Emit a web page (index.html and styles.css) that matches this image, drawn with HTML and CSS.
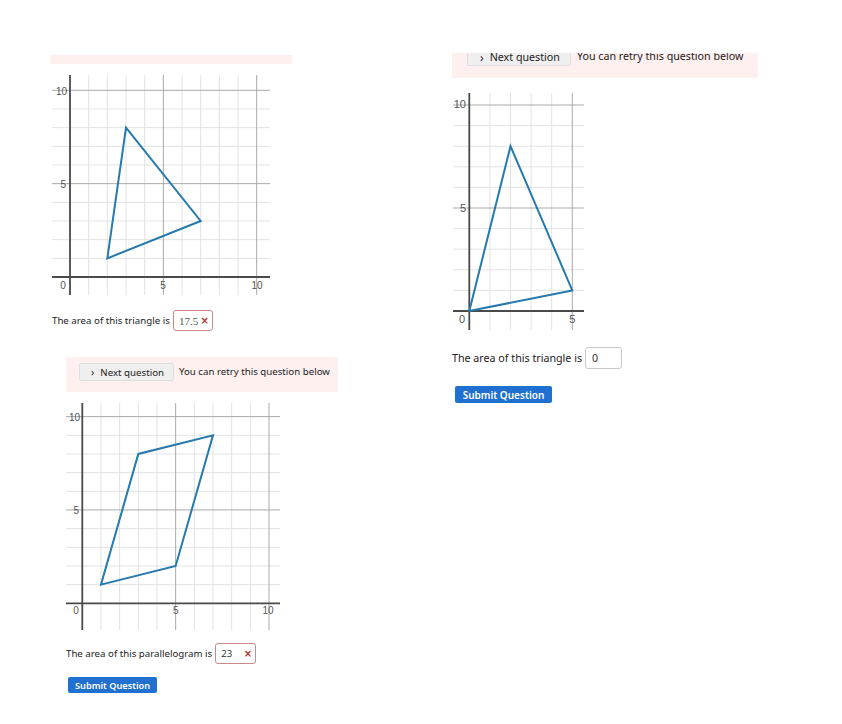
FILE: index.html
```html
<!DOCTYPE html>
<html lang="en">
<head>
<meta charset="utf-8">
<title>Area questions</title>
<link rel="stylesheet" href="styles.css">
</head>
<body>
<div class="page">
  <div class="col col-left">
    <div class="feedback-strip"></div>
    <svg class="graph g1" width="218" height="220" viewBox="0 0 218 220">
      <g transform="translate(18 202) scale(18.67 -18.67)">
        <path class="minor" d="M1-2V12M2-2V12M3-2V12M4-2V12M6-2V12M7-2V12M8-2V12M9-2V12M-2 1H12M-2 2H12M-2 3H12M-2 4H12M-2 6H12M-2 7H12M-2 8H12M-2 9H12"/>
        <path class="major" d="M5-2V12M10-2V12M-2 5H12M-2 10H12"/>
        <path class="axis" d="M0-2V12M-2 0H12"/>
        <polygon class="shape" points="3,8 7,3 2,1"/>
      </g>
      <text class="lbl" x="11" y="214" text-anchor="middle">0</text>
      <text class="lbl" x="111" y="214" text-anchor="middle">5</text>
      <text class="lbl" x="205" y="214" text-anchor="middle">10</text>
      <text class="lbl" x="15" y="19.5" text-anchor="end">10</text>
      <text class="lbl" x="14" y="112.5" text-anchor="end">5</text>
    </svg>
    <div class="answer-row">
      <span>The area of this triangle is</span>
      <span class="ans wrong w1"><span class="val serif">17.5</span><span class="cross">×</span></span>
    </div>

    <div class="section">
      <div class="feedback">
        <span class="next-btn"><span class="chev">›</span>Next question</span>
        <span class="retry">You can retry this question below</span>
      </div>
      <svg class="graph g3" width="214" height="227" viewBox="0 0 214 227">
        <g transform="translate(16.3 200.3) scale(18.67 -18.67)">
          <path class="minor" d="M1-2V12M2-2V12M3-2V12M4-2V12M6-2V12M7-2V12M8-2V12M9-2V12M-2 1H12M-2 2H12M-2 3H12M-2 4H12M-2 6H12M-2 7H12M-2 8H12M-2 9H12"/>
          <path class="major" d="M5-2V12M10-2V12M-2 5H12M-2 10H12"/>
          <path class="axis" d="M0-2V12M-2 0H12"/>
          <polygon class="shape" points="1,1 5,2 7,9 3,8"/>
        </g>
        <text class="lbl" x="10" y="211" text-anchor="middle">0</text>
        <text class="lbl" x="109.7" y="211" text-anchor="middle">5</text>
        <text class="lbl" x="202" y="211" text-anchor="middle">10</text>
        <text class="lbl" x="14" y="17.5" text-anchor="end">10</text>
        <text class="lbl" x="13" y="110.7" text-anchor="end">5</text>
      </svg>
      <div class="answer-row">
        <span>The area of this parallelogram is</span>
        <span class="ans wrong w3"><span class="val">23</span><span class="cross">×</span></span>
      </div>
      <span class="submit">Submit Question</span>
    </div>
  </div>

  <div class="col col-right">
    <div class="clip">
      <div class="feedback">
        <span class="next-btn"><span class="chev">›</span>Next question</span>
        <span class="retry">You can retry this question below</span>
      </div>
    </div>
    <svg class="graph g2" width="131" height="237" viewBox="0 0 131 237">
      <g transform="translate(16.3 218) scale(20.6 -20.6)">
        <path class="minor" d="M1-2V12M2-2V12M3-2V12M4-2V12M-2 1H12M-2 2H12M-2 3H12M-2 4H12M-2 6H12M-2 7H12M-2 8H12M-2 9H12"/>
        <path class="major" d="M5-2V12M-2 5H12M-2 10H12"/>
        <path class="axis" d="M0-2V12M-2 0H12"/>
        <polygon class="shape" points="0,0 2,8 5,1"/>
      </g>
      <text class="lbl big" x="9" y="230" text-anchor="middle">0</text>
      <text class="lbl big" x="119.3" y="230" text-anchor="middle">5</text>
      <text class="lbl big" x="13" y="15" text-anchor="end">10</text>
      <text class="lbl big" x="13" y="119" text-anchor="end">5</text>
    </svg>
    <div class="answer-row">
      <span>The area of this triangle is</span>
      <span class="ans w2"><span class="val">0</span></span>
    </div>
    <span class="submit">Submit Question</span>
  </div>
</div>
</body>
</html>
```

FILE: styles.css
```css
* { box-sizing: border-box; }
html, body { margin: 0; padding: 0; background: #ffffff; }
body { font-family: "Noto Sans", "Open Sans", sans-serif; color: #222; }

.page { display: flex; align-items: flex-start; width: 842px; height: 724px; overflow: hidden; }

.col { display: flex; flex-direction: column; align-items: flex-start; }
.col-left { margin-left: 50px; width: 402px; font-size: 9.7px; }
.col-right { width: 360px; font-size: 10.7px; }

.feedback-strip { margin-top: 55px; width: 242px; height: 9px; background: #fef0ef; }

.graph { display: block; overflow: hidden; }
.g1 { margin-top: 11px; margin-left: 2px; }
.g3 { margin-top: 11px; }
.g2 { margin-top: 15px; margin-left: 1px; }

.minor, .major, .axis, .shape { vector-effect: non-scaling-stroke; fill: none; }
.minor { stroke: #e3e3e3; stroke-width: 1; }
.major { stroke: #a9a9a9; stroke-width: 1; }
.axis { stroke: #4a4a4a; stroke-width: 1.8; }
.shape { stroke: #2679ad; stroke-width: 2; stroke-linejoin: miter; }
.lbl { font-family: "Liberation Sans", Arial, sans-serif; font-size: 10px; fill: #555; }
.lbl.big { font-size: 11px; }

.answer-row { display: flex; align-items: center; color: #222; }
.col-left > .answer-row { margin-top: 15px; margin-left: 2px; }
.section .answer-row { margin-top: 13px; }
.col-right .answer-row { margin-top: 17px; }

.ans { display: flex; align-items: center; margin-left: 3px; border: 1px solid #c9c9c9; border-radius: 3px; background: #fff; }
.ans.wrong { border-color: #c98a8a; }
.w1 { width: 40px; height: 21px; padding-left: 5px; }
.w3 { width: 41px; height: 21px; padding-left: 5px; }
.w2 { width: 37px; height: 22px; padding-left: 6px; }
.val { color: #333; }
.val.serif { font-family: "Liberation Serif", "Times New Roman", serif; font-size: 11px; color: #555; }
.cross { margin-left: auto; margin-right: 3px; color: #b0302b; font-weight: bold; font-family: "DejaVu Sans", sans-serif; font-size: 10px; }

.section { display: flex; flex-direction: column; align-items: flex-start; margin-left: 16px; margin-top: 26px; }

.feedback { display: flex; align-items: center; background: #fef0ef; }
.section .feedback { width: 272px; height: 35px; padding: 6px 0 11px 13px; align-items: flex-start; }
.next-btn { display: flex; align-items: center; height: 18px; padding: 0 9px 0 11px; background: #efefef; border: 1px solid #dedede; border-radius: 2px; color: #222; }
.chev { margin-right: 6px; font-size: 1.1em; }
.retry { margin-left: 5px; color: #222; line-height: 18px; }

.clip { margin-top: 53px; height: 25px; overflow: hidden; }
.clip .feedback { margin-top: -12px; width: 306px; height: 37px; padding: 6px 0 0 15px; align-items: flex-start; }
.clip .next-btn { height: 19px; padding: 0 10px 0 12px; }
.clip .retry { margin-left: 6px; line-height: 19px; }

.submit { display: flex; align-items: center; justify-content: center; background: #1f70d0; color: #fff; border-radius: 2px; font-weight: 600; }
.section .submit { margin-top: 13px; margin-left: 2px; width: 89px; height: 16px; font-size: 9.2px; }
.col-right .submit { margin-top: 17px; margin-left: 3px; width: 97px; height: 17px; font-size: 10px; }
```
